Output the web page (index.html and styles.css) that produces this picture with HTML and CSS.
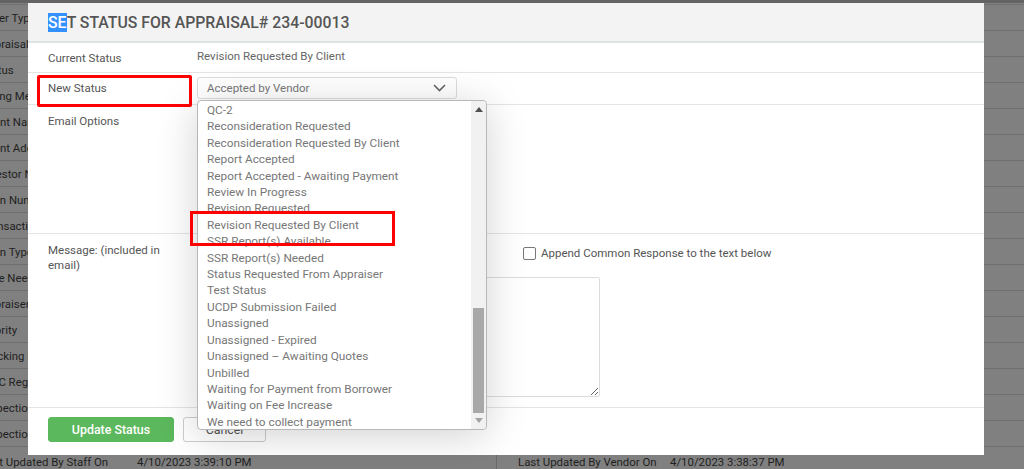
FILE: index.html
```html
<!DOCTYPE html>
<html lang="en">
<head>
<meta charset="utf-8">
<title>Set Status</title>
<link rel="stylesheet" href="styles.css">
</head>
<body>
<div class="bg">
  <div class="bg-head"></div>
  <div class="bg-table">
    <div class="bg-row"><div class="bg-cell"><span>Order Type</span><span></span></div><div class="bg-cell bg-right"></div></div>
    <div class="bg-row"><div class="bg-cell"><span>Appraisal Type</span><span></span></div><div class="bg-cell bg-right"></div></div>
    <div class="bg-row"><div class="bg-cell"><span>Status</span><span></span></div><div class="bg-cell bg-right"></div></div>
    <div class="bg-row"><div class="bg-cell"><span>Billing Method</span><span></span></div><div class="bg-cell bg-right"></div></div>
    <div class="bg-row"><div class="bg-cell"><span>Client Name</span><span></span></div><div class="bg-cell bg-right"></div></div>
    <div class="bg-row"><div class="bg-cell"><span>Client Address</span><span></span></div><div class="bg-cell bg-right"></div></div>
    <div class="bg-row"><div class="bg-cell"><span>Investor Name</span><span></span></div><div class="bg-cell bg-right"></div></div>
    <div class="bg-row"><div class="bg-cell"><span>Loan Number</span><span></span></div><div class="bg-cell bg-right"></div></div>
    <div class="bg-row"><div class="bg-cell"><span>Transaction Type</span><span></span></div><div class="bg-cell bg-right"></div></div>
    <div class="bg-row"><div class="bg-cell"><span>Loan Type</span><span></span></div><div class="bg-cell bg-right"></div></div>
    <div class="bg-row"><div class="bg-cell"><span>Date Needed</span><span></span></div><div class="bg-cell bg-right"></div></div>
    <div class="bg-row"><div class="bg-cell"><span>Appraiser</span><span></span></div><div class="bg-cell bg-right"></div></div>
    <div class="bg-row"><div class="bg-cell"><span>Priority</span><span></span></div><div class="bg-cell bg-right"></div></div>
    <div class="bg-row"><div class="bg-cell"><span>Tracking Number</span><span></span></div><div class="bg-cell bg-right"></div></div>
    <div class="bg-row"><div class="bg-cell"><span>AMC Reg. Number</span><span></span></div><div class="bg-cell bg-right"></div></div>
    <div class="bg-row"><div class="bg-cell"><span>Inspection Date</span><span></span></div><div class="bg-cell bg-right"></div></div>
    <div class="bg-row"><div class="bg-cell"><span>Inspection Time</span><span></span></div><div class="bg-cell bg-right"></div></div>
    <div class="bg-row bg-last"><div class="bg-cell"><span>Last Updated By Staff On</span><span>4/10/2023 3:39:10 PM</span></div><div class="bg-cell bg-right"><span>Last Updated By Vendor On</span><span>4/10/2023 3:38:37 PM</span></div></div>
  </div>
</div>

<div class="modal">
  <div class="modal-header">
    <h2><span class="sel">SE</span>T STATUS FOR APPRAISAL# 234-00013</h2>
  </div>
  <div class="modal-body">
    <div class="row r-current">
      <div class="label">Current Status</div>
      <div class="value">Revision Requested By Client</div>
    </div>
    <div class="row r-new">
      <div class="label label-mark">New Status</div>
      <div class="value new-value">
        <div class="select">
          <span>Accepted by Vendor</span>
          <svg class="chev" width="13" height="8" viewBox="0 0 13 8"><polyline points="1,1 6.5,6.5 12,1" fill="none" stroke="#666" stroke-width="1.6"/></svg>
        </div>
        <div class="dropdown">
          <ul class="options">
            <li>QC-2</li>
            <li>Reconsideration Requested</li>
            <li>Reconsideration Requested By Client</li>
            <li>Report Accepted</li>
            <li>Report Accepted - Awaiting Payment</li>
            <li>Review In Progress</li>
            <li>Revision Requested</li>
            <li class="opt-mark">Revision Requested By Client</li>
            <li>SSR Report(s) Available</li>
            <li>SSR Report(s) Needed</li>
            <li>Status Requested From Appraiser</li>
            <li>Test Status</li>
            <li>UCDP Submission Failed</li>
            <li>Unassigned</li>
            <li>Unassigned - Expired</li>
            <li>Unassigned – Awaiting Quotes</li>
            <li>Unbilled</li>
            <li>Waiting for Payment from Borrower</li>
            <li>Waiting on Fee Increase</li>
            <li>We need to collect payment</li>
          </ul>
          <div class="scrollbar">
            <div class="sb-arrow"><svg width="8" height="5" viewBox="0 0 8 5"><polygon points="0,5 4,0 8,5" fill="#505050"/></svg></div>
            <div class="sb-track"><div class="sb-thumb"></div></div>
            <div class="sb-arrow"><svg width="8" height="5" viewBox="0 0 8 5"><polygon points="0,0 8,0 4,5" fill="#a3a3a3"/></svg></div>
          </div>
        </div>
      </div>
    </div>
    <div class="row r-email">
      <div class="label">Email Options</div>
      <div class="value"></div>
    </div>
    <div class="row r-msg">
      <div class="label">Message: (included in email)</div>
      <div class="value msg-value">
        <label class="check-line"><input type="checkbox" class="chk"><span>Append Common Response to the text below</span></label>
        <textarea class="msg-text"></textarea>
      </div>
    </div>
  </div>
  <div class="modal-footer">
    <button class="btn btn-green">Update Status</button>
    <button class="btn btn-cancel">Cancel</button>
  </div>
</div>
</body>
</html>
```

FILE: styles.css
```css
* { box-sizing: border-box; }
html, body { margin: 0; padding: 0; }
body {
  width: 1024px;
  height: 469px;
  overflow: hidden;
  position: relative;
  background: #808080;
  font-family: Roboto, "Liberation Sans", Arial, sans-serif;
}

/* dimmed page behind the modal */
.bg-head {
  height: 5px;
  border-top: 3px solid #636363;
  border-bottom: 1px solid #6f6f6f;
}
.bg-table { margin-left: -19px; }
.bg-row {
  display: grid;
  grid-template-columns: 515px 1fr;
  height: 26px;
  border-bottom: 1px solid #6f6f6f;
}
.bg-cell {
  display: grid;
  grid-template-columns: 156px 1fr;
  align-items: center;
  font-size: 11.4px;
  color: #1f1f1f;
  white-space: nowrap;
  overflow: hidden;
}
.bg-right {
  border-left: 1px solid #6a6a6a;
  padding-left: 21px;
  grid-template-columns: 152px 1fr;
}
.bg-last .bg-cell { padding-top: 4px; }

/* modal */
.modal {
  position: absolute;
  left: 28px;
  top: 3px;
  width: 956px;
  height: 452px;
  background: #fff;
  display: flex;
  flex-direction: column;
}
.modal-header {
  height: 40px;
  flex-shrink: 0;
  background: #f3f3f3;
  border-bottom: 2px solid #dee4e4;
  padding: 0 20px;
  display: flex;
  align-items: center;
}
.modal-header h2 {
  margin: 0;
  font-size: 15.8px;
  font-weight: 500;
  color: #555;
  white-space: nowrap;
}
.sel { background: #3390ff; color: #fff; }

.row {
  display: flex;
  border-bottom: 1px solid #e4e4e4;
  padding: 0 20px;
}
.label {
  width: 149px;
  flex-shrink: 0;
  padding-right: 16px;
  font-size: 11.5px;
  line-height: 15px;
  color: #555;
}
.value {
  font-size: 11.5px;
  line-height: 15px;
  color: #666;
}
.r-current { height: 30px; }
.r-current .label { padding-top: 8px; }
.r-current .value { padding-top: 6px; }

.r-new { height: 32px; }
.r-new .label { padding-top: 8px; }
.label-mark { position: relative; }
.label-mark::after {
  content: "";
  position: absolute;
  left: -11px;
  top: 2px;
  width: 149px;
  height: 26px;
  border: 3px solid #f00;
  border-radius: 2px;
}
.new-value { position: relative; padding-top: 4px; }
.select {
  width: 260px;
  height: 22px;
  border: 1px solid #dcdcdc;
  border-radius: 3px;
  padding: 0 9px;
  display: flex;
  align-items: center;
  justify-content: space-between;
  color: #777;
}
.chev { margin-right: 1px; }

.dropdown {
  position: absolute;
  left: 0;
  top: 27px;
  width: 290px;
  height: 330px;
  background: #fff;
  border: 1px solid #b8b8b8;
  border-radius: 4px;
  box-shadow: 0 6px 40px rgba(0, 0, 0, 0.18);
  display: flex;
  z-index: 5;
}
.options {
  list-style: none;
  margin: 0;
  padding: 1px 0 0;
  flex: 1;
  font-size: 11.8px;
  line-height: 16.4px;
  color: #777;
  white-space: nowrap;
  border-radius: 4px 0 0 4px;
}
.options li { padding-left: 9px; }
.opt-mark { position: relative; }
.opt-mark::after {
  content: "";
  position: absolute;
  left: -8px;
  top: -6px;
  width: 199px;
  height: 29px;
  border: 3px solid #f00;
  z-index: 6;
}
.scrollbar {
  width: 15px;
  background: #f1f1f1;
  display: flex;
  flex-direction: column;
  border-radius: 0 4px 4px 0;
}
.sb-arrow {
  height: 17px;
  display: flex;
  align-items: center;
  justify-content: center;
}
.sb-track { flex: 1; padding: 0 2px; }
.sb-thumb {
  margin-top: 190px;
  height: 105px;
  background: #a8a8a8;
}

.r-email { height: 129px; }
.r-email .label { padding-top: 9px; }

.r-msg { height: 174px; }
.r-msg .label { padding-top: 9px; }
.msg-value { padding-top: 9px; display: flex; flex-direction: column; }
.check-line {
  display: flex;
  align-items: center;
  height: 20px;
  margin-left: 326px;
  color: #555;
  gap: 5px;
}
.chk {
  appearance: none;
  -webkit-appearance: none;
  width: 13px;
  height: 13px;
  margin: 0;
  border: 1px solid #777;
  border-radius: 2px;
  background: #fff;
}
.msg-text {
  margin-top: 14px;
  width: 403px;
  height: 120px;
  border: 1px solid #dcdcdc;
  border-radius: 2px;
  resize: vertical;
  font-family: inherit;
}

.modal-footer {
  flex: 1;
  padding: 9px 20px 0;
  display: flex;
  align-items: flex-start;
  gap: 9px;
}
.btn {
  height: 25px;
  font-family: inherit;
  font-size: 12.4px;
  border-radius: 3px;
  padding: 0;
}
.btn-green {
  width: 126px;
  background: #5cb85c;
  border: 1px solid #5cb85c;
  color: #fff;
  font-weight: 500;
}
.btn-cancel {
  width: 83px;
  background: #fff;
  border: 1px solid #ccc;
  color: #555;
}
```
